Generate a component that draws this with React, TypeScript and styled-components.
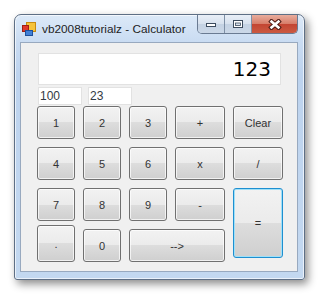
import styled, { createGlobalStyle, css } from 'styled-components';

const GlobalStyle = createGlobalStyle`
  html, body {
    margin: 0;
    padding: 0;
    background: #ffffff;
  }
`;

const Page = styled.div`
  width: 320px;
  height: 295px;
  padding: 14px;
  box-sizing: border-box;
`;

const Window = styled.div`
  width: 291px;
  height: 266px;
  box-sizing: border-box;
  display: flex;
  flex-direction: column;
  border: 1px solid #5e6f85;
  border-radius: 7px 7px 3px 3px;
  background: linear-gradient(180deg, #dce9f8 0px, #cadcf2 26px, #bdd3ee 60px, #c3d8f0 100%);
  box-shadow:
    inset 0 0 0 1px rgba(255, 255, 255, 0.65),
    3px 4px 9px rgba(0, 0, 0, 0.45);
`;

const TitleBar = styled.div`
  height: 27px;
  flex: none;
  display: flex;
  align-items: flex-start;
  padding-left: 7px;
`;

const TitleIcon = styled.svg`
  width: 14px;
  height: 14px;
  margin-top: 7px;
  flex: none;
`;

const TitleText = styled.span`
  margin-left: 6px;
  margin-top: 7px;
  font-family: 'Liberation Sans', Arial, sans-serif;
  font-size: 11.8px;
  line-height: 14px;
  color: #1e1e1e;
  white-space: nowrap;
`;

const CaptionGroup = styled.div`
  margin-left: auto;
  margin-right: 6px;
  display: flex;
  height: 18px;
  border: 1px solid #6a7b92;
  border-top: none;
  border-radius: 0 0 5px 5px;
  overflow: hidden;
`;

const CaptionButton = styled.div<{ $kind: 'min' | 'max' | 'close' }>`
  display: flex;
  align-items: center;
  justify-content: center;
  width: ${(p) => (p.$kind === 'close' ? 45 : 26)}px;
  background: linear-gradient(180deg, #e9eff7 0%, #d7e1ee 50%, #c4d2e3 51%, #cbd8e8 100%);
  border-right: 1px solid #7f90a6;
  ${(p) =>
    p.$kind === 'close' &&
    css`
      border-right: none;
      background: linear-gradient(180deg, #e8ad9d 0%, #d87e6a 48%, #c34532 52%, #cb5a42 100%);
    `}
`;

const Client = styled.div`
  flex: 1;
  margin: 0 6px 7px 5px;
  border: 1px solid #98a9bf;
  background: #f0f0f0;
  padding: 10px 0 0 16px;
  display: flex;
  flex-direction: column;
`;

const Display = styled.div`
  width: 243px;
  height: 32px;
  margin-left: 1px;
  box-sizing: border-box;
  border: 1px solid #e2e2e2;
  background: #ffffff;
  display: flex;
  align-items: center;
  justify-content: flex-end;
  padding-right: 9px;
  font-family: 'DejaVu Sans', Verdana, sans-serif;
  font-size: 20px;
  color: #000000;
`;

const InputsRow = styled.div`
  display: flex;
  gap: 6px;
  margin: 2px 0 0 1px;
`;

const SmallBox = styled.div`
  width: 44px;
  height: 18px;
  box-sizing: border-box;
  border: 1px solid #e2e2e2;
  background: #ffffff;
  padding-left: 1px;
  font-family: 'Liberation Sans', Arial, sans-serif;
  font-size: 12px;
  line-height: 16px;
  color: #333a44;
`;

const Keypad = styled.div`
  margin-top: 1px;
  display: grid;
  grid-template-columns: 38px 38px 38px 50px 50px;
  grid-template-rows: repeat(4, 33px);
  gap: 8px;
`;

const Key = styled.div<{ $span?: number; $rows?: number; $focused?: boolean; $raise?: number; $h?: number }>`
  grid-column: span ${(p) => p.$span ?? 1};
  grid-row: span ${(p) => p.$rows ?? 1};
  margin-top: ${(p) => -(p.$raise ?? 0)}px;
  height: ${(p) => (p.$h ? `${p.$h}px` : 'auto')};
  align-self: start;
  min-height: ${(p) => 33 + (p.$raise ?? 0)}px;
  box-sizing: border-box;
  display: flex;
  align-items: center;
  justify-content: center;
  border: 1px solid #707070;
  border-radius: 3px;
  background: linear-gradient(180deg, #f2f2f2 0%, #ebebeb 50%, #dddddd 50%, #cfcfcf 100%);
  box-shadow: inset 0 0 0 1px rgba(255, 255, 255, 0.7);
  font-family: 'Liberation Sans', Arial, sans-serif;
  font-size: 11px;
  color: #333333;
  ${(p) =>
    p.$focused &&
    css`
      border-color: #1e8fd0;
      box-shadow: inset 0 0 0 1px #9fe0f8;
    `}
`;

const AppIcon = () => (
  <TitleIcon viewBox="0 0 14 14">
    <rect x="4.5" y="0.5" width="9" height="9" fill="#f6c33a" stroke="#c78a10" />
    <rect x="0.5" y="3.5" width="6" height="6" fill="#e0392b" stroke="#9e1f14" />
    <rect x="3.5" y="8.5" width="7" height="5" fill="#3f7fd6" stroke="#1d4f9a" />
  </TitleIcon>
);

const MinGlyph = () => (
  <svg width="12" height="8" viewBox="0 0 12 8">
    <rect x="1.5" y="3.5" width="9" height="3" fill="#ffffff" stroke="#3c4b5e" />
  </svg>
);

const MaxGlyph = () => (
  <svg width="12" height="10" viewBox="0 0 12 10">
    <rect x="1.5" y="1.5" width="9" height="7" fill="#ffffff" stroke="#3c4b5e" />
    <rect x="3.5" y="4" width="5" height="2.5" fill="#d8e2ee" stroke="#3c4b5e" strokeWidth="0.8" />
  </svg>
);

const CloseGlyph = () => (
  <svg width="14" height="11" viewBox="0 0 14 11">
    <path d="M3.5 2.5 L10.5 8.5 M10.5 2.5 L3.5 8.5" stroke="#4a1a14" strokeWidth="4.6" strokeLinecap="square" />
    <path d="M3.5 2.5 L10.5 8.5 M10.5 2.5 L3.5 8.5" stroke="#ffffff" strokeWidth="2.6" strokeLinecap="square" />
  </svg>
);

export default function App() {
  return (
    <>
      <GlobalStyle />
      <Page>
        <Window>
          <TitleBar>
            <AppIcon />
            <TitleText>vb2008tutorialz - Calculator</TitleText>
            <CaptionGroup>
              <CaptionButton $kind="min">
                <MinGlyph />
              </CaptionButton>
              <CaptionButton $kind="max">
                <MaxGlyph />
              </CaptionButton>
              <CaptionButton $kind="close">
                <CloseGlyph />
              </CaptionButton>
            </CaptionGroup>
          </TitleBar>
          <Client>
            <Display>123</Display>
            <InputsRow>
              <SmallBox>100</SmallBox>
              <SmallBox>23</SmallBox>
            </InputsRow>
            <Keypad>
              <Key>1</Key>
              <Key>2</Key>
              <Key>3</Key>
              <Key>+</Key>
              <Key>Clear</Key>
              <Key>4</Key>
              <Key>5</Key>
              <Key>6</Key>
              <Key>x</Key>
              <Key>/</Key>
              <Key>7</Key>
              <Key>8</Key>
              <Key>9</Key>
              <Key>-</Key>
              <Key $rows={2} $focused $h={70}>=</Key>
              <Key $raise={4}>.</Key>
              <Key>0</Key>
              <Key $span={2}>--&gt;</Key>
            </Keypad>
          </Client>
        </Window>
      </Page>
    </>
  );
}
